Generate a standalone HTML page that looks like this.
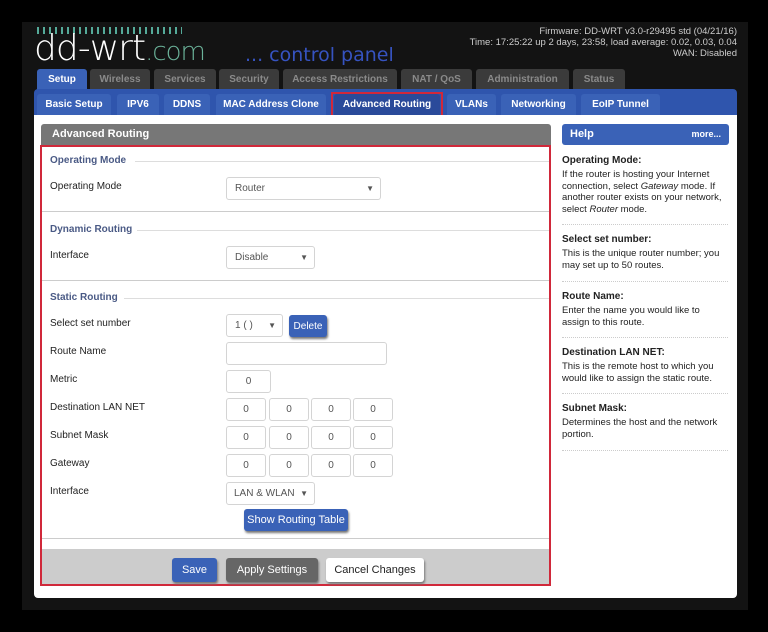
<!DOCTYPE html>
<html><head><style>
*{margin:0;padding:0;box-sizing:border-box}
body{width:768px;height:632px;background:#000;position:relative;overflow:hidden;font-family:"Liberation Sans",sans-serif;font-size:10px;color:#222}
.a{position:absolute}
.frame{left:22px;top:22px;width:726px;height:588px;background:#131313}
.tab{position:absolute;top:69px;height:21px;background:#3b3b3b;color:#8a8a8a;font-weight:bold;font-size:10px;line-height:21px;text-align:center;border-radius:3px 3px 0 0}
.st{position:absolute;top:94px;height:21px;background:#3a62b7;color:#fff;font-weight:bold;font-size:10px;line-height:21px;text-align:center;border-radius:3px 3px 0 0}
.lab{position:absolute;left:50px;font-size:10px;color:#222}
.sec{position:absolute;left:50px;font-size:10px;font-weight:bold;color:#4a5a85}
.line{position:absolute;height:1px;background:#ddd}
.inp{position:absolute;border:1px solid #d4d4d4;border-radius:3px;background:#fff;font-size:10px;color:#555;display:flex;align-items:center}
.ip{width:40px;height:23px;justify-content:center}
.btn{position:absolute;border-radius:3px;font-size:11px;display:flex;align-items:center;justify-content:center;box-shadow:1px 2px 2px #777}
.help h4{font-size:10px;font-weight:bold;color:#222;margin-bottom:3px}
.help p{font-size:9.5px;line-height:11.5px;color:#222}
.hs{position:absolute;left:562px;width:166px;border-bottom:1px dotted #ccc}
.arr{position:absolute;right:6px;font-size:8px}
</style></head><body>
<div class="a frame"></div>
<div class="a" style="left:37px;top:27px;width:145px;height:7px;background:repeating-linear-gradient(90deg,#5a9 0 2px,transparent 2px 6px)"></div>
<div class="a" style="left:34px;top:31px;font-size:36px;color:#fff;letter-spacing:-1px;font-family:'DejaVu Sans',sans-serif;font-weight:300;line-height:36px">dd-wrt<span style="color:#6bb39a;font-size:26px">.com</span></div>
<div class="a" style="left:245px;top:44px;font-size:19px;color:#3653c0;font-family:'DejaVu Sans',sans-serif;line-height:22px">... control panel</div>
<div class="a" style="right:31px;top:26px;color:#ccc;font-size:9.5px;text-align:right;line-height:11px">Firmware: DD-WRT v3.0-r29495 std (04/21/16)<br>Time: 17:25:22 up 2 days, 23:58, load average: 0.02, 0.03, 0.04<br>WAN: Disabled</div>
<div class="tab" style="left:37px;width:50px;background:#3a62b7;color:#fff;height:25px">Setup</div>
<div class="tab" style="left:90px;width:60px">Wireless</div>
<div class="tab" style="left:154px;width:62px">Services</div>
<div class="tab" style="left:219px;width:60px">Security</div>
<div class="tab" style="left:283px;width:114px">Access Restrictions</div>
<div class="tab" style="left:401px;width:71px">NAT / QoS</div>
<div class="tab" style="left:476px;width:93px">Administration</div>
<div class="tab" style="left:573px;width:52px">Status</div>
<div class="a" style="left:34px;top:89px;width:703px;height:28px;background:#2f55ad;border-radius:4px 4px 0 0"></div>
<div class="st" style="left:37px;width:74px">Basic Setup</div>
<div class="st" style="left:117px;width:42px">IPV6</div>
<div class="st" style="left:164px;width:46px">DDNS</div>
<div class="st" style="left:216px;width:110px">MAC Address Clone</div>
<div class="a" style="left:331px;top:92px;width:112px;height:25px;border:2px solid #d0283a"></div>
<div class="st" style="left:334px;width:106px;background:#2a4a9a">Advanced Routing</div>
<div class="st" style="left:447px;width:49px">VLANs</div>
<div class="st" style="left:501px;width:75px">Networking</div>
<div class="st" style="left:581px;width:79px">EoIP Tunnel</div>
<div class="a" style="left:34px;top:115px;width:703px;height:483px;background:#fff;border-radius:0 0 4px 4px"></div>
<div class="a" style="left:41px;top:124px;width:510px;height:21px;background:#777;color:#fff;font-weight:bold;font-size:11px;line-height:21px;padding-left:11px;border-radius:3px 3px 0 0">Advanced Routing</div>
<div class="a" style="left:40px;top:145px;width:511px;height:441px;border:2px solid #d0283a"></div>
<div class="a" style="left:42px;top:549px;width:507px;height:35px;background:#ccc"></div>
<div class="line" style="left:42px;top:211px;width:507px;background:#ccc"></div>
<div class="line" style="left:42px;top:280px;width:507px;background:#ccc"></div>
<div class="line" style="left:42px;top:538px;width:507px;background:#ccc"></div>
<div class="sec" style="top:155px">Operating Mode</div><div class="line" style="left:135px;top:161px;width:414px"></div>
<div class="lab" style="top:181px">Operating Mode</div>
<div class="inp" style="left:226px;top:177px;width:155px;height:23px;padding-left:8px">Router<span class="arr">▼</span></div>
<div class="sec" style="top:224px">Dynamic Routing</div><div class="line" style="left:137px;top:230px;width:412px"></div>
<div class="lab" style="top:250px">Interface</div>
<div class="inp" style="left:226px;top:246px;width:89px;height:23px;padding-left:8px">Disable<span class="arr">▼</span></div>
<div class="sec" style="top:292px">Static Routing</div><div class="line" style="left:124px;top:298px;width:425px"></div>
<div class="lab" style="top:318px">Select set number</div>
<div class="inp" style="left:226px;top:314px;width:57px;height:23px;padding-left:8px">1 ( )<span class="arr">▼</span></div>
<div class="btn" style="left:289px;top:315px;width:38px;height:22px;background:#3a62b7;color:#fff;font-size:10px">Delete</div>
<div class="lab" style="top:346px">Route Name</div>
<div class="inp" style="left:226px;top:342px;width:161px;height:23px"></div>
<div class="lab" style="top:374px">Metric</div>
<div class="inp ip" style="left:226px;top:370px;width:45px">0</div>
<div class="lab" style="top:402px">Destination LAN NET</div>
<div class="lab" style="top:430px">Subnet Mask</div>
<div class="lab" style="top:458px">Gateway</div>
<div class="inp ip" style="left:226px;top:398px">0</div><div class="inp ip" style="left:269px;top:398px">0</div><div class="inp ip" style="left:311px;top:398px">0</div><div class="inp ip" style="left:353px;top:398px">0</div>
<div class="inp ip" style="left:226px;top:426px">0</div><div class="inp ip" style="left:269px;top:426px">0</div><div class="inp ip" style="left:311px;top:426px">0</div><div class="inp ip" style="left:353px;top:426px">0</div>
<div class="inp ip" style="left:226px;top:454px">0</div><div class="inp ip" style="left:269px;top:454px">0</div><div class="inp ip" style="left:311px;top:454px">0</div><div class="inp ip" style="left:353px;top:454px">0</div>
<div class="lab" style="top:486px">Interface</div>
<div class="inp" style="left:226px;top:482px;width:89px;height:23px;padding-left:7px">LAN &amp; WLAN<span class="arr">▼</span></div>
<div class="btn" style="left:244px;top:509px;width:104px;height:22px;background:#3a62b7;color:#fff">Show Routing Table</div>
<div class="btn" style="left:172px;top:558px;width:45px;height:24px;background:#3a62b7;color:#fff">Save</div>
<div class="btn" style="left:226px;top:558px;width:92px;height:24px;background:#666;color:#fff">Apply Settings</div>
<div class="btn" style="left:326px;top:558px;width:98px;height:24px;background:#fff;color:#222">Cancel Changes</div>
<div class="a" style="left:562px;top:124px;width:167px;height:21px;background:#3a62b7;color:#fff;font-weight:bold;font-size:11px;line-height:21px;padding:0 8px;border-radius:3px"><span>Help</span><span style="float:right;font-size:9px">more...</span></div>
<div class="a help" style="left:562px;top:155px;width:166px"><h4>Operating Mode:</h4><p>If the router is hosting your Internet connection, select <i>Gateway</i> mode. If another router exists on your network, select <i>Router</i> mode.</p></div>
<div class="hs" style="top:224px"></div>
<div class="a help" style="left:562px;top:234px;width:166px"><h4>Select set number:</h4><p>This is the unique router number; you may set up to 50 routes.</p></div>
<div class="hs" style="top:281px"></div>
<div class="a help" style="left:562px;top:291px;width:160px"><h4>Route Name:</h4><p>Enter the name you would like to assign to this route.</p></div>
<div class="hs" style="top:337px"></div>
<div class="a help" style="left:562px;top:347px;width:166px"><h4>Destination LAN NET:</h4><p>This is the remote host to which you would like to assign the static route.</p></div>
<div class="hs" style="top:393px"></div>
<div class="a help" style="left:562px;top:403px;width:166px"><h4>Subnet Mask:</h4><p>Determines the host and the network portion.</p></div>
<div class="hs" style="top:450px"></div>
</body></html>
